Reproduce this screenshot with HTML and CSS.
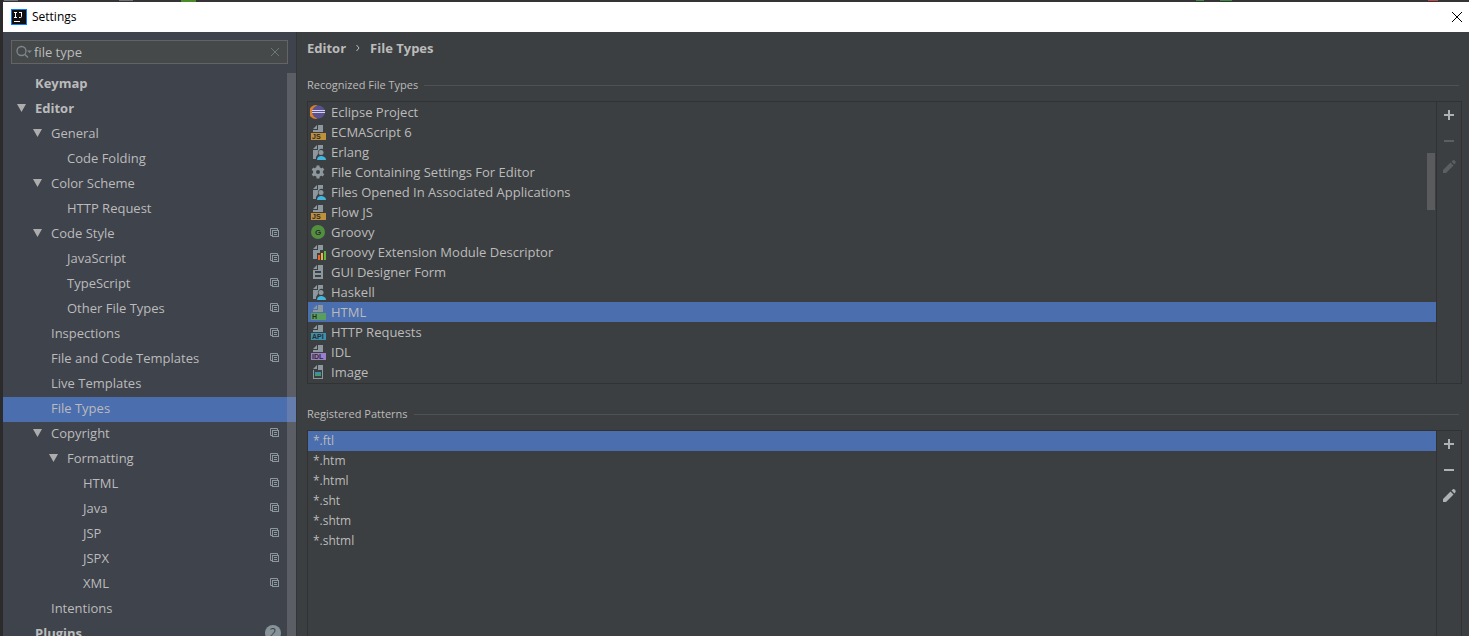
FILE: index.html
```html
<!DOCTYPE html>
<html lang="en">
<head>
  <meta charset="UTF-8" />
  <meta name="viewport" content="width=device-width, initial-scale=1.0"/>
  <title>Settings</title>
  <link rel="stylesheet" href="styles.css">
</head>
<body>

  <!-- icon sprites -->
  <svg class="sprites" aria-hidden="true">
    <symbol id="copy" viewBox="0 0 10 10">
      <path d="M2.5 7.5H.5V.5H7.5V2.5" fill="none" stroke="#8d979f"/>
      <rect x="2.5" y="2.5" width="6" height="6" fill="none" stroke="#8d979f"/>
      <path d="M4 4.5H7M4 6.5H7" stroke="#8d979f"/>
    </symbol>
    <symbol id="file" viewBox="0 0 16 16">
      <path d="M8 1H13V15H3V6H8ZM7 1V5H3Z" fill="#8d979e"/>
    </symbol>
    <symbol id="half" viewBox="0 0 16 16">
      <path d="M8 1H13V8H3V6H8ZM7 1V5H3Z" fill="#8d979e"/>
    </symbol>
    <symbol id="user" viewBox="0 0 16 16">
      <path d="M8 1H13V5A4 4 0 0 0 8 10L6 13V15H3V6H8ZM7 1V5H3Z" fill="#8d979e"/>
      <circle cx="11" cy="8.500" r="2.500" fill="#8d979e"/>
      <path d="M7 16C7 13 9 12 11 12S16 13 16 16Z" fill="#40b6e0"/>
    </symbol>
    <symbol id="plus" viewBox="0 0 16 16">
      <path d="M7 3H9V7H13V9H9V13H7V9H3V7H7Z" fill="currentColor"/>
    </symbol>
    <symbol id="minus" viewBox="0 0 16 16">
      <path d="M3 7H13V9H3Z" fill="currentColor"/>
    </symbol>
    <symbol id="pencil" viewBox="0 0 16 16">
      <path d="M2 11 9.500 3.500 12.500 6.500 5 14H2ZM10.500 2.500 12 1.200Q13 .8 14 1.800T14.600 4L13.500 5.500Z" fill="currentColor"/>
    </symbol>
  </svg>

  <div class="backdrop"></div>

  <div class="window">
    <header class="titlebar">
      <svg class="app-icon" viewBox="0 0 16 16">
        <rect width="16" height="16" fill="#087cfa"/>
        <rect x="1" y="1" width="14" height="14" fill="#101010"/>
        <path d="M3 3.500H6M4.500 3.500V8M3 8.500H6M8 3.500H11M10.500 3.500V7.500Q10.500 8.500 9.500 8.500H8M3 12.500H9" fill="none" stroke="#fff"/>
      </svg>
      <h1>Settings</h1>
      <button class="close" aria-label="Close">
        <svg viewBox="0 0 10 10"><path d="M0 0 10 10M10 0 0 10" stroke="#000"/></svg>
      </button>
    </header>

    <div class="content">
      <aside class="sidebar">
        <div class="search">
          <svg class="search-icon" viewBox="0 0 16 16">
            <circle cx="5.500" cy="7" r="4.500" fill="none" stroke="#7f878c" stroke-width="1.300"/>
            <path d="M9 10.500 12 13.500" stroke="#7f878c" stroke-width="1.500"/>
            <path d="M11 6.500H16L13.500 9Z" fill="#7f878c"/>
          </svg>
          <input type="text" value="file type" aria-label="Search settings">
          <button class="clear" aria-label="Clear">
            <svg viewBox="0 0 8 8"><path d="M0 0 8 8M8 0 0 8" stroke="#6e7678"/></svg>
          </button>
        </div>

        <ul class="tree">
          <li class="top">Keymap</li>
          <li class="top open">Editor</li>
          <li class="level-1 open">General</li>
          <li class="level-2">Code Folding</li>
          <li class="level-1 open">Color Scheme</li>
          <li class="level-2">HTTP Request</li>
          <li class="level-1 open">Code Style<svg><use href="#copy"/></svg></li>
          <li class="level-2">JavaScript<svg><use href="#copy"/></svg></li>
          <li class="level-2">TypeScript<svg><use href="#copy"/></svg></li>
          <li class="level-2">Other File Types<svg><use href="#copy"/></svg></li>
          <li class="level-1">Inspections<svg><use href="#copy"/></svg></li>
          <li class="level-1">File and Code Templates<svg><use href="#copy"/></svg></li>
          <li class="level-1">Live Templates</li>
          <li class="level-1 selected">File Types</li>
          <li class="level-1 open">Copyright<svg><use href="#copy"/></svg></li>
          <li class="level-2 open">Formatting<svg><use href="#copy"/></svg></li>
          <li class="level-3">HTML<svg><use href="#copy"/></svg></li>
          <li class="level-3">Java<svg><use href="#copy"/></svg></li>
          <li class="level-3">JSP<svg><use href="#copy"/></svg></li>
          <li class="level-3">JSPX<svg><use href="#copy"/></svg></li>
          <li class="level-3">XML<svg><use href="#copy"/></svg></li>
          <li class="level-1">Intentions</li>
          <li class="top">Plugins<span class="count">2</span></li>
        </ul>
        <div class="tree-scroll"></div>
      </aside>

      <main class="main">
        <nav class="breadcrumb">
          <span>Editor</span>
          <svg viewBox="0 0 4 8"><path d="M.5 1 3 4 .5 7" fill="none" stroke="#bbb"/></svg>
          <span>File Types</span>
        </nav>

        <section class="group types">
          <h2>Recognized File Types</h2>
          <div class="panel">
            <ul class="list">
              <li>
                <svg viewBox="0 0 16 16">
                  <path d="M6 1A7 7 0 0 0 6 15L8 14V2Z" fill="#d9822b"/>
                  <circle cx="8.500" cy="8" r="6.500" fill="#5a5190"/>
                  <path d="M2 6.500H15M2 8.500H15" stroke="#d8d4e8"/>
                </svg>
                Eclipse Project
              </li>
              <li><svg viewBox="0 0 16 16"><use href="#half"/><rect x="1" y="9" width="15" height="7" fill="#c0913a"/><text x="2" y="15" class="badge">JS</text></svg>ECMAScript 6</li>
              <li><svg><use href="#user"/></svg>Erlang</li>
              <li>
                <svg viewBox="0 0 16 16">
                  <circle cx="8" cy="8" r="3.500" fill="none" stroke="#8d979e" stroke-width="3"/>
                  <path d="M8 1.500V4M8 12V14.500M2.400 4.750 4.500 6M11.500 10 13.600 11.250M2.400 11.250 4.500 10M11.500 6 13.600 4.750" stroke="#8d979e" stroke-width="3"/>
                </svg>
                File Containing Settings For Editor
              </li>
              <li><svg><use href="#user"/></svg>Files Opened In Associated Applications</li>
              <li><svg viewBox="0 0 16 16"><use href="#half"/><rect x="1" y="9" width="15" height="7" fill="#c0913a"/><text x="2" y="15" class="badge">JS</text></svg>Flow JS</li>
              <li><svg viewBox="0 0 16 16"><circle cx="8" cy="8" r="7" fill="#52903f"/><text x="5" y="11" class="badge round">G</text></svg>Groovy</li>
              <li>
                <svg viewBox="0 0 16 16">
                  <path d="M8 1H13V6H10V9H7V15H3V6H8ZM7 1V5H3Z" fill="#8d979e"/>
                  <rect x="8" y="11" width="2" height="5" fill="#f26522"/>
                  <rect x="11" y="9" width="2" height="7" fill="#f4af3d"/>
                  <rect x="14" y="7" width="2" height="9" fill="#62b543"/>
                </svg>
                Groovy Extension Module Descriptor
              </li>
              <li><svg viewBox="0 0 16 16"><use href="#file"/><path d="M5 7H11V9H5ZM5 11H11V13H5Z" fill="#3c3f41"/></svg>GUI Designer Form</li>
              <li><svg><use href="#user"/></svg>Haskell</li>
              <li class="selected"><svg viewBox="0 0 16 16"><use href="#half"/><rect x="1" y="9" width="15" height="7" fill="#5a9e5c"/><text x="2" y="15" class="badge">H</text></svg>HTML</li>
              <li><svg viewBox="0 0 16 16"><use href="#half"/><rect x="1" y="9" width="15" height="7" fill="#3a91ae"/><text x="2" y="15" class="badge">API</text></svg>HTTP Requests</li>
              <li><svg viewBox="0 0 16 16"><use href="#half"/><rect x="1" y="9" width="15" height="7" fill="#9a7fc8"/><text x="2" y="15" class="badge">IDL</text></svg>IDL</li>
              <li><svg viewBox="0 0 16 16"><use href="#file"/><rect x="4" y="6" width="8" height="8" fill="#3c3f41"/><rect x="5" y="8" width="6" height="4" fill="#3a8fb0"/><path d="M5 11 7 10 9 11 11 10V12H5Z" fill="#499c54"/></svg>Image</li>
            </ul>
            <div class="list-scroll"></div>
            <div class="tools">
              <button aria-label="Add file type"><svg><use href="#plus"/></svg></button>
              <button aria-label="Remove file type" disabled><svg><use href="#minus"/></svg></button>
              <button aria-label="Edit file type" disabled><svg><use href="#pencil"/></svg></button>
            </div>
          </div>
        </section>

        <section class="group patterns">
          <h2>Registered Patterns</h2>
          <div class="panel">
            <ul class="list">
              <li class="selected">*.ftl</li>
              <li>*.htm</li>
              <li>*.html</li>
              <li>*.sht</li>
              <li>*.shtm</li>
              <li>*.shtml</li>
            </ul>
            <div class="tools">
              <button aria-label="Add pattern"><svg><use href="#plus"/></svg></button>
              <button aria-label="Remove pattern"><svg><use href="#minus"/></svg></button>
              <button aria-label="Edit pattern"><svg><use href="#pencil"/></svg></button>
            </div>
          </div>
        </section>
      </main>
    </div>
  </div>

</body>
</html>
```
FILE: styles.css
```css
* {
  margin: 0;
  padding: 0;
  box-sizing: border-box;
}

body {
  font-family: "Open Sans", "Noto Sans", sans-serif;
  font-size: 13px;
  line-height: 18px;
  color: #bbbbbb;
  background: #2b2b2b;
  height: 100vh;
  overflow: hidden;
  display: flex;
  flex-direction: column;
  padding-left: 3px;
}

ul {
  list-style: none;
}

button {
  background: none;
  border: none;
  color: inherit;
  display: flex;
}

svg {
  flex: none;
  display: block;
}

.sprites {
  display: none;
}

/* sliver of the editor behind the dialog */
.backdrop {
  height: 2px;
  flex: none;
  background:
    linear-gradient(#6e7478, #6e7478) 1px 0 / 14px 1px no-repeat,
    linear-gradient(#6e7478, #6e7478) 116px 0 / 14px 1px no-repeat,
    linear-gradient(#4a8a2a, #4a8a2a) 178px 0 / 15px 2px no-repeat,
    linear-gradient(#3c8c40, #3c8c40) 1193px 0 / 8px 1px no-repeat,
    linear-gradient(#3c8c40, #3c8c40) 1217px 0 / 12px 1px no-repeat,
    linear-gradient(#c04a48, #c04a48) 1425px 0 / 10px 1px no-repeat,
    #353335;
}

.window {
  flex: 1;
  min-height: 0;
  display: flex;
  flex-direction: column;
}

/* title bar */
.titlebar {
  height: 30px;
  flex: none;
  display: flex;
  align-items: center;
  gap: 5px;
  padding: 0 7px 0 8px;
  background: #fff;
  color: #000;
}

.titlebar h1 {
  flex: 1;
  font-size: 12px;
  font-weight: 400;
}

.app-icon {
  width: 16px;
  height: 16px;
}

.close svg {
  width: 10px;
  height: 10px;
}

.content {
  flex: 1;
  min-height: 0;
  display: flex;
}

/* left side */
.sidebar {
  position: relative;
  width: 294px;
  flex: none;
  overflow: hidden;
  padding-top: 8px;
  background: #3f434c;
  border-right: 1px solid #343638;
}

.search {
  display: flex;
  align-items: center;
  height: 24px;
  margin: 0 8px 8px;
  padding: 0 8px 0 4px;
  background: #45494a;
  border: 1px solid #646464;
}

.search-icon {
  width: 16px;
  height: 16px;
}

.search input {
  flex: 1;
  min-width: 0;
  padding-left: 2px;
  font: inherit;
  color: inherit;
  background: none;
  border: none;
  outline: none;
}

.clear svg {
  width: 8px;
  height: 8px;
}

.tree li {
  display: flex;
  align-items: center;
  height: 25px;
  padding-right: 16px;
  padding-bottom: 3px;
  padding-left: 32px;
}

.tree .top {
  font-weight: 700;
}

.tree .level-1 {
  padding-left: 48px;
}

.tree .level-2 {
  padding-left: 64px;
}

.tree .level-3 {
  padding-left: 80px;
}

.tree .open::before {
  content: "";
  width: 9px;
  height: 8px;
  margin-left: -18px;
  margin-right: 9px;
  background: #adadad;
  clip-path: polygon(0 0, 100% 0, 50% 100%);
}

.tree svg {
  width: 10px;
  height: 10px;
  margin-left: auto;
}

.count {
  width: 16px;
  height: 16px;
  margin-right: -1px;
  margin-left: auto;
  border-radius: 50%;
  font-size: 12px;
  line-height: 16px;
  font-weight: 400;
  text-align: center;
  color: #3c3f41;
  background: #87939a;
}

.selected {
  background: #4b6eaf;
}

.tree-scroll {
  position: absolute;
  top: 41px;
  right: 0;
  bottom: 0;
  width: 9px;
  background: rgba(166, 166, 166, 0.28);
}

/* right side */
.main {
  flex: 1;
  min-width: 0;
  display: flex;
  flex-direction: column;
  padding: 6px 7px 0 10px;
  background: #3c3f41;
}

.breadcrumb {
  display: flex;
  align-items: center;
  gap: 10px;
  height: 20px;
  margin-bottom: 17px;
  font-weight: 700;
}

.breadcrumb svg {
  width: 4px;
  height: 8px;
}

.group {
  display: flex;
  flex-direction: column;
}

.types {
  margin-bottom: 20px;
}

.patterns {
  flex: 1;
  min-height: 0;
}

.group h2 {
  display: flex;
  align-items: center;
  gap: 6px;
  height: 20px;
  margin-bottom: 6px;
  font-size: 11px;
  font-weight: 400;
}

.group h2::after {
  content: "";
  flex: 1;
  height: 1px;
  margin-right: 3px;
  background: #515151;
}

.panel {
  position: relative;
  flex: 1;
  display: flex;
  border: 1px solid #323232;
}

.patterns .panel {
  border-bottom: none;
}

.list {
  flex: 1;
}

.types .list {
  padding-bottom: 1px;
}

.list li {
  display: flex;
  align-items: center;
  gap: 5px;
  height: 20px;
  padding-left: 2px;
}

.patterns .list li {
  padding-left: 5px;
  font-size: 12px;
}

.list svg {
  width: 16px;
  height: 16px;
}

.badge {
  font: 700 7px "Liberation Sans", sans-serif;
  fill: #2b2b2b;
}

.round {
  font-size: 8px;
}

.list-scroll {
  position: absolute;
  top: 51px;
  right: 26px;
  width: 8px;
  height: 57px;
  background: #595b5d;
}

.tools {
  display: flex;
  flex-direction: column;
  align-items: center;
  gap: 10px;
  width: 25px;
  padding-top: 5px;
  border-left: 1px solid #323232;
}

.tools button {
  color: #afb1b3;
}

.tools button:disabled {
  color: #5c5e60;
}

.tools svg {
  width: 16px;
  height: 16px;
}
```
